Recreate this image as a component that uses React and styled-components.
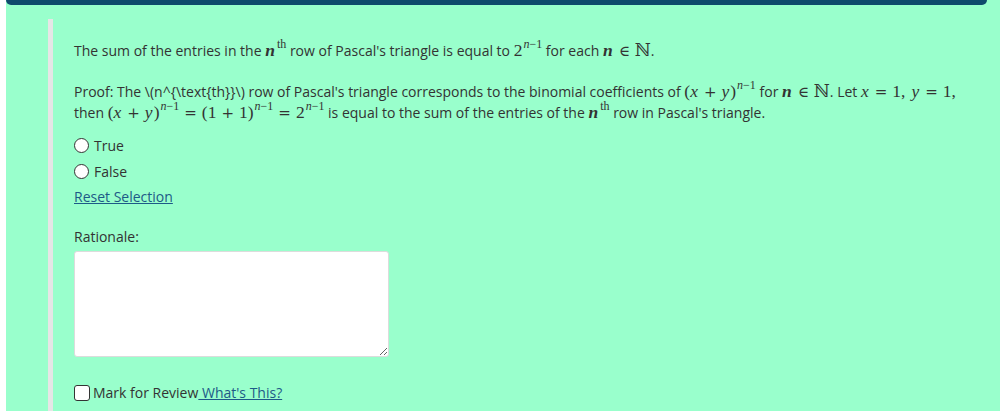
import React from "react";
import styled, { createGlobalStyle } from "styled-components";

const Global = createGlobalStyle`
  html, body {
    margin: 0;
    padding: 0;
    background: #ffffff;
    font-family: "Open Sans", "Noto Sans", sans-serif;
    overflow: hidden;
  }
`;

const Page = styled.div`
  padding-left: 6px;
  height: 411px;
  overflow: hidden;
`;

const Panel = styled.div`
  background: #99ffcc;
  min-height: 411px;
  display: flex;
  flex-direction: column;
`;

const HeaderBar = styled.div`
  flex: none;
  height: 5px;
  margin-right: 13px;
  background: #0f4a6c;
  border-radius: 0 0 9px 9px;
`;

const Quote = styled.div`
  flex: 1 0 auto;
  margin: 14px 0 0 42px;
  border-left: 5px solid #e6e6e6;
  padding: 21px 0 20px 21px;
  color: #333333;
  font-size: 14px;
  line-height: 21px;
`;

const Para = styled.p`
  margin: 0 0 ${(p) => p.gap || 0}px;
  width: 885px;
`;

const M = styled.span`
  font-family: "Liberation Serif", "DejaVu Serif", serif;
  font-size: 17.5px;
  line-height: 0;
  margin-right: ${(p) => (p.up ? 0 : 1)}px;
  font-style: ${(p) => (p.up ? "normal" : "italic")};
  font-weight: ${(p) => (p.bold ? 600 : 400)};
`;

const Op = styled.span`
  font-family: "DejaVu Serif", "Liberation Serif", serif;
  font-size: 15px;
  line-height: 0;
  margin: 0 ${(p) => p.space ?? 5}px;
`;

const Sup = styled.sup`
  font-family: "Liberation Serif", "DejaVu Serif", serif;
  font-size: 12px;
  line-height: 0;
  vertical-align: 8px;
  margin-left: 1px;
  font-style: ${(p) => (p.it ? "italic" : "normal")};
`;

const Options = styled.div`
  margin-top: 9px;
  display: flex;
  flex-direction: column;
`;

const OptionRow = styled.label`
  display: flex;
  align-items: center;
  gap: 5px;
  height: 26px;
`;

const Radio = styled.span`
  width: 13px;
  height: 13px;
  border: 1.3px solid #333;
  border-radius: 50%;
  background: #fff;
  flex: none;
`;

const Link = styled.a`
  color: #1d5a87;
  text-decoration: underline;
  cursor: pointer;
`;

const ResetRow = styled.div`
  height: 24px;
  display: flex;
  align-items: center;
`;

const Label = styled.div`
  margin-top: 16px;
  height: 24px;
  display: flex;
  align-items: center;
`;

const TextArea = styled.textarea`
  display: block;
  margin-top: 3px;
  width: 315px;
  height: 106px;
  box-sizing: border-box;
  border: 1px solid #dcdcdc;
  border-radius: 3px;
  background: #fff;
  resize: vertical;
`;

const ReviewRow = styled.div`
  margin-top: 25px;
  height: 21px;
  display: flex;
  align-items: center;
  gap: 3px;
`;

const Box = styled.span`
  width: 14px;
  height: 14px;
  border: 1.3px solid #333;
  border-radius: 3px;
  background: #fff;
  flex: none;
`;

const NMinus1 = () => (
  <Sup it>
    n<span style={{ fontStyle: "normal" }}>−1</span>
  </Sup>
);

export default function App() {
  return (
    <Page>
      <Global />
      <Panel>
        <HeaderBar />
        <Quote>
          <Para gap={20}>
            The sum of the entries in the <M bold>n</M>
            <Sup>th</Sup> row of Pascal's triangle is equal to <M up>2</M>
            <NMinus1 /> for each <M bold>n</M>
            <Op>∈</Op>
            <M up>ℕ</M>.
          </Para>
          <Para>
            Proof: The \(n^{"{"}\text{"{"}th{"}"}{"}"}\) row of Pascal's triangle corresponds to the
            binomial coefficients of <M up>(</M>
            <M>x</M>
            <Op>+</Op>
            <M>y</M>
            <M up>)</M>
            <NMinus1 /> for <M bold>n</M>
            <Op>∈</Op>
            <M up>ℕ</M>. Let <M>x</M>
            <Op>=</Op>
            <M up>1,</M>
            <Op space={3} />
            <M>y</M>
            <Op>=</Op>
            <M up>1,</M> then <M up>(</M>
            <M>x</M>
            <Op>+</Op>
            <M>y</M>
            <M up>)</M>
            <NMinus1 />
            <Op>=</Op>
            <M up>(1</M>
            <Op>+</Op>
            <M up>1)</M>
            <NMinus1 />
            <Op>=</Op>
            <M up>2</M>
            <NMinus1 /> is equal to the sum of the entries of the <M bold>n</M>
            <Sup>th</Sup> row in Pascal's triangle.
          </Para>
          <Options>
            <OptionRow>
              <Radio />
              True
            </OptionRow>
            <OptionRow>
              <Radio />
              False
            </OptionRow>
            <ResetRow>
              <Link>Reset Selection</Link>
            </ResetRow>
          </Options>
          <Label>Rationale:</Label>
          <TextArea />
          <ReviewRow>
            <Box />
            <span>
              Mark for Review<Link> What's This?</Link>
            </span>
          </ReviewRow>
        </Quote>
      </Panel>
    </Page>
  );
}
